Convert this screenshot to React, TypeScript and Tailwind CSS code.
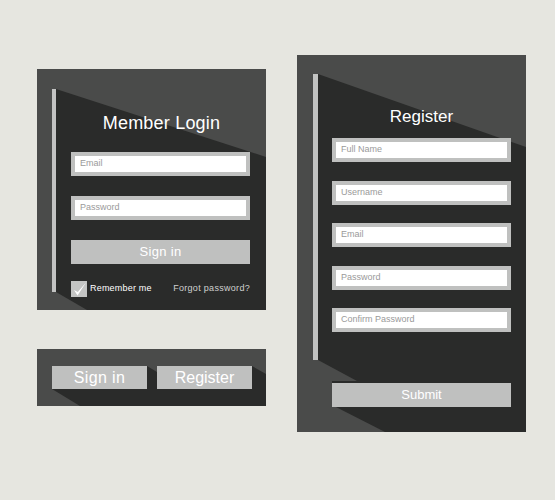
const field =
  "h-[24px] w-full bg-[#bfc0bf] p-[4px] flex";
const inner =
  "flex-1 bg-white flex items-center pl-[5px] text-[9px] text-[#9a9a9a]";

const Field = ({ label }: { label: string }) => (
  <div className={field}>
    <div className={inner}>{label}</div>
  </div>
);

// long flat shadows behind each panel
const Shade = ({ w, h, points, bar }: { w: number; h: number; points: string; bar?: [number, number, number, number] }) => (
  <svg className="absolute inset-0" width={w} height={h} viewBox={`0 0 ${w} ${h}`}>
    <polygon points={points} fill="#2a2b2a" />
    {bar && <rect x={bar[0]} y={bar[1]} width={bar[2]} height={bar[3]} fill="#c2c3c2" />}
  </svg>
);

const Check = () => (
  <svg width="16" height="16" viewBox="0 0 16 16">
    <rect width="16" height="16" fill="#c4c5c4" />
    <path d="M3 9 L6.5 14.5 L15 1.5 L6.8 11 Z" fill="#ffffff" />
  </svg>
);

const MemberLogin = () => (
  <div className="relative w-[229px] h-[241px] bg-[#4a4b4a]">
    <Shade w={229} h={241} points="19,20 229,88 229,241 50,241 19,223" bar={[15, 20, 4, 203]} />
    <div className="relative flex flex-col pl-[34px] pr-[16px]">
      <h2 className="mt-[43px] text-center text-[18px] leading-[22px] text-white pl-[2px] tracking-[0.2px]">Member Login</h2>
      <div className="mt-[18px]">
        <Field label="Email" />
      </div>
      <div className="mt-[20px]">
        <Field label="Password" />
      </div>
      <div className="mt-[20px] h-[24px] bg-[#bfc0bf] flex items-center justify-center text-[13px] text-white tracking-[0.3px]">
        Sign in
      </div>
      <div className="mt-[17px] flex items-center">
        <Check />
        <span className="ml-[3px] text-[9px] text-white tracking-[0.2px]">Remember me</span>
        <span className="ml-auto text-[9px] text-[#cfd0cf] tracking-[0.3px]">Forgot password?</span>
      </div>
    </div>
  </div>
);

const QuickActions = () => (
  <div className="relative w-[229px] h-[57px] bg-[#4a4b4a]">
    <Shade w={229} h={57} points="15,40 43,57 229,57 229,25 215,17 120,17 120,23 110,17 15,17" />
    <div className="relative flex gap-[10px] pl-[15px] pt-[17px]">
      <div className="w-[95px] h-[23px] bg-[#bfc0bf] flex items-center justify-center text-[16px] text-white tracking-[0.4px]">
        Sign in
      </div>
      <div className="w-[95px] h-[23px] bg-[#bfc0bf] flex items-center justify-center text-[16px] text-white">
        Register
      </div>
    </div>
  </div>
);

const RegisterCard = () => (
  <div className="relative w-[229px] h-[377px] bg-[#4a4b4a]">
    <Shade
      w={229}
      h={377}
      points="21,19 229,92 229,377 88,377 35,350 35,326 60,326 21,305"
      bar={[16, 19, 5, 286]}
    />
    <div className="relative flex flex-col pl-[35px] pr-[15px]">
      <h2 className="mt-[51px] text-center text-[17px] leading-[22px] text-white">Register</h2>
      <div className="mt-[10px] flex flex-col gap-[18.5px]">
        <Field label="Full Name" />
        <Field label="Username" />
        <Field label="Email" />
        <Field label="Password" />
        <Field label="Confirm Password" />
      </div>
      <div className="mt-[51px] h-[24px] bg-[#bfc0bf] flex items-center justify-center text-[13px] text-white">
        Submit
      </div>
    </div>
  </div>
);

export default function App() {
  return (
    <div className="w-[555px] h-[500px] bg-[#e6e6e0] font-['Liberation_Sans',Arial,sans-serif] flex items-start gap-[31px] pl-[37px] pt-[55px]">
      <div className="mt-[14px] flex flex-col gap-[39px]">
        <MemberLogin />
        <QuickActions />
      </div>
      <RegisterCard />
    </div>
  );
}
